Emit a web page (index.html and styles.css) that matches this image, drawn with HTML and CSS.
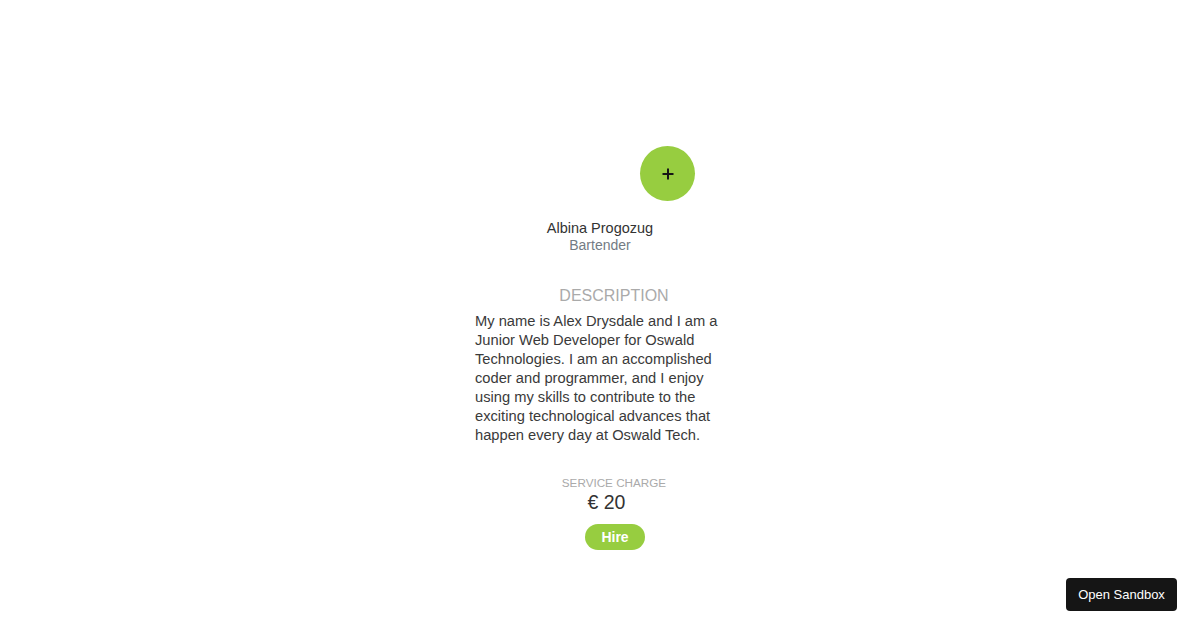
FILE: index.html
```html
<!DOCTYPE html>
<html>
<head>
<meta charset="utf-8">
<link rel="stylesheet" href="styles.css">
</head>
<body>
<main class="page">
  <section class="card">
    <div class="avatar-row">
      <button class="avatar-add"><svg width="12" height="12" viewBox="0 0 12 12"><path d="M6 0.5V11.5M0.5 6H11.5" stroke="#161616" stroke-width="2" fill="none"/></svg></button>
    </div>
    <div class="identity">
      <div class="name">Albina Progozug</div>
      <div class="role">Bartender</div>
    </div>
    <div class="desc">
      <h2 class="desc-title">DESCRIPTION</h2>
      <p class="desc-text">My name is Alex Drysdale and I am a Junior Web Developer for Oswald Technologies. I am an accomplished coder and programmer, and I enjoy using my skills to contribute to the exciting technological advances that happen every day at Oswald Tech.</p>
    </div>
    <div class="charge">
      <div class="charge-label">SERVICE CHARGE</div>
      <div class="charge-value">€ 20</div>
      <button class="hire">Hire</button>
    </div>
  </section>
</main>
<button class="sandbox">Open Sandbox</button>
</body>
</html>
```
FILE: styles.css
```css
html, body {
  margin: 0;
  padding: 0;
  background: #ffffff;
  font-family: "Liberation Sans", Arial, sans-serif;
}
.page {
  display: flex;
  justify-content: center;
  padding-top: 146px;
}
.card {
  width: 250px;
  display: flex;
  flex-direction: column;
}
.avatar-row {
  display: flex;
  padding-left: 165px;
}
.avatar-add {
  width: 55px;
  height: 55px;
  border-radius: 50%;
  border: none;
  background: #97cd40;
  padding: 0;
  display: flex;
  align-items: center;
  justify-content: center;
}
.avatar-add svg {
  display: block;
}
.identity {
  margin-top: 18px;
  text-align: center;
}
.name {
  font-size: 14.5px;
  color: #333333;
  line-height: 18px;
}
.role {
  font-size: 14px;
  color: #737b84;
  line-height: 17px;
}
.desc {
  margin-top: 32px;
}
.desc-title {
  margin: 0;
  font-weight: normal;
  font-size: 16px;
  line-height: 19px;
  color: #aaaaaa;
  text-align: center;
  padding-left: 28px;
}
.desc-text {
  margin: 7px 0 0 0;
  font-size: 14.7px;
  line-height: 19px;
  color: #3a3a3a;
}
.charge {
  margin-top: 31px;
  display: flex;
  flex-direction: column;
  align-items: center;
  padding-left: 28px;
}
.charge-label {
  font-size: 11.7px;
  line-height: 14px;
  color: #aaaaaa;
}
.charge-value {
  font-size: 19.5px;
  line-height: 24px;
  color: #333333;
  margin-right: 15px;
}
.hire {
  margin-top: 10px;
  margin-left: 2px;
  width: 60px;
  height: 26px;
  border: none;
  border-radius: 13px;
  background: #97cd40;
  color: #ffffff;
  font-family: "Liberation Sans", Arial, sans-serif;
  font-weight: bold;
  font-size: 14px;
  padding: 0;
}
.sandbox {
  position: fixed;
  right: 23px;
  bottom: 19px;
  width: 111px;
  height: 33px;
  border: none;
  border-radius: 4px;
  background: #151515;
  color: #ffffff;
  font-family: "Liberation Sans", Arial, sans-serif;
  font-size: 13px;
  padding: 0;
}
```
